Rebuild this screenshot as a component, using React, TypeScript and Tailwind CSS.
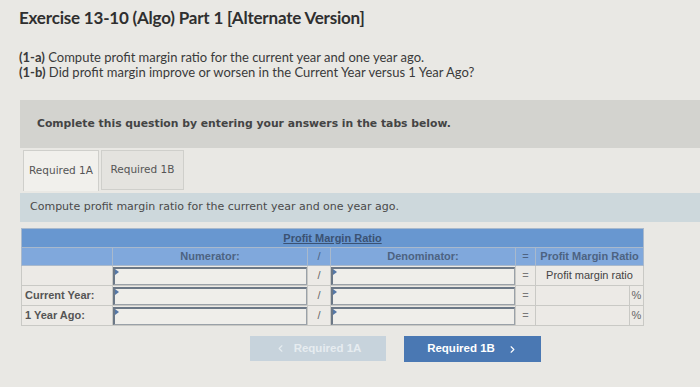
import { ChevronLeft, ChevronRight } from 'lucide-react'

const rows = [
  { label: '', result: 'Profit margin ratio', pct: false },
  { label: 'Current Year:', result: '', pct: true },
  { label: '1 Year Ago:', result: '', pct: true },
]

function Input() {
  return (
    <div className="relative h-[18px] border-t-2 border-l-2 border-[#6c7886] border-b border-r border-b-[#9aa1a8] border-r-[#9aa1a8] bg-[#efeeea]">
      <span className="absolute left-0 top-0 w-0 h-0 border-t-[3px] border-b-[3px] border-l-[4px] border-t-transparent border-b-transparent border-l-[#5577a5]" />
    </div>
  )
}

export default function App() {
  return (
    <div className="w-[700px] h-[387px] overflow-hidden bg-[#e9e8e4] font-['Lato',sans-serif] text-[#3a3a3a]">
      <h1 className="pl-[19px] pt-[7px] text-[17px] leading-[21px] font-bold tracking-[-0.2px] text-[#2f2f2f]">
        Exercise 13-10 (Algo) Part 1 [Alternate Version]
      </h1>

      <div className="pl-[19px] pt-[22px] text-[13px] leading-[15px] text-[#3a3a3a]">
        <p><b>(1-a)</b> Compute profit margin ratio for the current year and one year ago.</p>
        <p><b>(1-b)</b> Did profit margin improve or worsen in the Current Year versus 1 Year Ago?</p>
      </div>

      <div className="ml-[20px] mt-[20px] h-[48px] flex items-center pl-[17px] bg-[#d3d3cf] font-['DejaVu_Sans',sans-serif] text-[10.8px] font-bold text-[#444]">
        Complete this question by entering your answers in the tabs below.
      </div>

      <div className="ml-[23px] mt-[2px] flex gap-[2px] font-['DejaVu_Sans',sans-serif] text-[10.5px] text-[#555]">
        <div className="w-[76px] h-[41px] flex items-center justify-center border border-b-0 border-[#cfcfcb] bg-[#f1f0ec]">Required 1A</div>
        <div className="w-[83px] h-[40px] flex items-center justify-center border border-[#cfcfcb] bg-[#e4e3df]">Required 1B</div>
      </div>

      <div className="ml-[20px] mt-[2px] h-[29px] flex items-center pl-[10px] bg-[#cdd8dc] font-['DejaVu_Sans',sans-serif] text-[11px] text-[#4a4a4a]">
        Compute profit margin ratio for the current year and one year ago.
      </div>

      <table className="ml-[21px] mt-[6px] border-collapse font-['Liberation_Sans',sans-serif] text-[11px]">
        <colgroup>
          <col className="w-[91px]" />
          <col className="w-[195px]" />
          <col className="w-[23px]" />
          <col className="w-[185px]" />
          <col className="w-[20px]" />
          <col className="w-[108px]" />
        </colgroup>
        <tbody>
          <tr className="h-[19px] bg-[#6897d0]">
            <td colSpan={6} className="border border-[#a9b9cc] text-center align-bottom pb-[1px]">
              <span className="font-bold text-[#3b5273] underline">Profit Margin Ratio</span>
            </td>
          </tr>
          <tr className="h-[18px] bg-[#80a8dc] font-bold text-[#4d6382]">
            <td className="border border-[#a9b9cc]" />
            <td className="border border-[#a9b9cc] text-center">Numerator:</td>
            <td className="border border-[#a9b9cc] text-center font-normal">/</td>
            <td className="border border-[#a9b9cc] text-center">Denominator:</td>
            <td className="border border-[#a9b9cc] text-center font-normal">=</td>
            <td className="border border-[#a9b9cc] text-center whitespace-nowrap">Profit Margin Ratio</td>
          </tr>
          {rows.map((r, i) => (
            <tr key={i} className="h-[20px] bg-[#eceae6]">
              <td className="border border-[#c9c9c5] pl-[3px] font-bold text-[#555] whitespace-nowrap">{r.label}</td>
              <td className="border border-[#c9c9c5] p-0"><Input /></td>
              <td className="border border-[#c9c9c5] text-center text-[#666]">/</td>
              <td className="border border-[#c9c9c5] p-0"><Input /></td>
              <td className="border border-[#c9c9c5] text-center text-[#777]">=</td>
              <td className="border border-[#c9c9c5] p-0 text-[#444]">
                {r.pct ? (
                  <div className="flex h-[19px]">
                    <div className="flex-1" />
                    <div className="w-[14px] border-l border-[#c9c9c5] flex items-center justify-center text-[#666]">%</div>
                  </div>
                ) : (
                  <div className="text-center whitespace-nowrap">{r.result}</div>
                )}
              </td>
            </tr>
          ))}
        </tbody>
      </table>

      <div className="mt-[10px] flex gap-[18px] pl-[250px] font-['Liberation_Sans',sans-serif] text-[11.5px] font-bold">
        <button className="w-[136px] h-[25px] flex items-center justify-center gap-[8px] bg-[#c7d3dc] text-[#e6ecf0]">
          <ChevronLeft size={11} strokeWidth={2.5} />
          Required 1A
        </button>
        <button className="w-[137px] h-[26px] flex items-center justify-center gap-[12px] bg-[#4a78b3] text-white">
          Required 1B
          <ChevronRight size={11} strokeWidth={2.5} />
        </button>
      </div>
    </div>
  )
}
